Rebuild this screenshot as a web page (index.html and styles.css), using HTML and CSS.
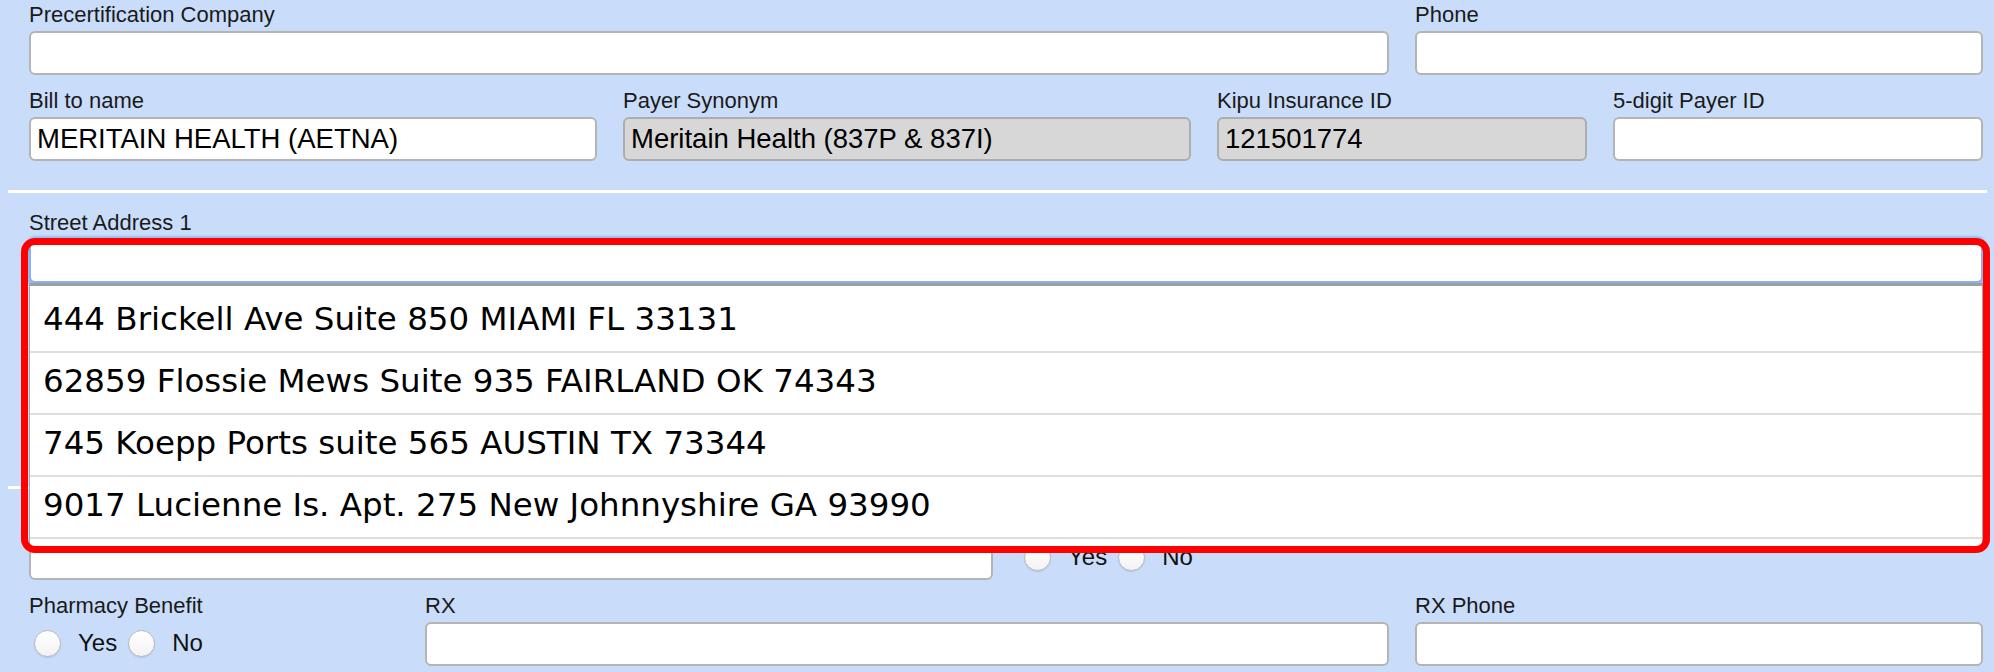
FILE: index.html
```html
<!DOCTYPE html>
<html lang="en">
<head>
<meta charset="utf-8">
<title>Insurance form</title>
<link rel="stylesheet" href="styles.css">
</head>
<body>
<form class="form">
  <div class="row">
    <div class="col w70"><label class="lbl">Precertification Company</label><input class="inp" type="text"></div>
    <div class="col w30"><label class="lbl">Phone</label><input class="inp" type="text"></div>
  </div>
  <div class="row">
    <div class="col w30"><label class="lbl">Bill to name</label><input class="inp" type="text" value="MERITAIN HEALTH (AETNA)"></div>
    <div class="col w30"><label class="lbl">Payer Synonym</label><input class="inp ro" type="text" readonly value="Meritain Health (837P &amp; 837I)"></div>
    <div class="col w20"><label class="lbl">Kipu Insurance ID</label><input class="inp ro" type="text" readonly value="121501774"></div>
    <div class="col w20"><label class="lbl">5-digit Payer ID</label><input class="inp" type="text"></div>
  </div>
  <hr class="sep sep1">
  <div class="row">
    <div class="col w100">
      <label class="lbl">Street Address 1</label>
      <div class="ac">
        <input class="inp focus" type="text">
        <ul class="ac-list">
          <li>444 Brickell Ave Suite 850 MIAMI FL 33131</li>
          <li>62859 Flossie Mews Suite 935 FAIRLAND OK 74343</li>
          <li>745 Koepp Ports suite 565 AUSTIN TX 73344</li>
          <li>9017 Lucienne Is. Apt. 275 New Johnnyshire GA 93990</li>
        </ul>
        <div class="hl"></div>
      </div>
    </div>
  </div>
  <div class="row">
    <div class="col w30"><span class="lbl"></span><input class="inp" type="text"></div>
    <div class="col w30"><span class="lbl"></span><input class="inp" type="text"></div>
    <div class="col w20"><span class="lbl"></span><input class="inp" type="text"></div>
    <div class="col w20"><span class="lbl"></span><input class="inp" type="text"></div>
  </div>
  <div class="row">
    <div class="col w50"><span class="lbl"></span><input class="inp" type="text"></div>
    <div class="col w50"><span class="lbl"></span><input class="inp" type="text"></div>
  </div>
  <hr class="sep sep2">
  <div class="row">
    <div class="col w50"><span class="lbl"></span><input class="inp" type="text"></div>
    <div class="col w50"><span class="lbl"></span>
      <div class="radios">
        <label class="radio"><input type="radio" name="q1">Yes</label>
        <label class="radio"><input type="radio" name="q1">No</label>
      </div>
    </div>
  </div>
  <div class="row">
    <div class="col w20"><label class="lbl">Pharmacy Benefit</label>
      <div class="radios">
        <label class="radio"><input type="radio" name="pb">Yes</label>
        <label class="radio"><input type="radio" name="pb">No</label>
      </div>
    </div>
    <div class="col w50"><label class="lbl">RX</label><input class="inp" type="text"></div>
    <div class="col w30"><label class="lbl">RX Phone</label><input class="inp" type="text"></div>
  </div>
</form>
</body>
</html>
```

FILE: styles.css
```css
html, body {
  margin: 0;
  padding: 0;
  height: 100%;
  overflow: hidden;
  background: #c9ddfb;
}

.form {
  display: flex;
  flex-direction: column;
  margin: 0;
  padding: 2px 11px 0 29px;
  font-family: "Liberation Sans", Arial, sans-serif;
  color: #111;
}

.row {
  display: flex;
  margin-left: -26px;
  margin-bottom: 13px;
}

.col {
  box-sizing: border-box;
  padding-left: 26px;
  min-width: 0;
}

.w100 { width: 100%; }
.w70 { width: 70%; }
.w50 { width: 50%; }
.w30 { width: 30%; }
.w20 { width: 20%; }

.lbl {
  display: block;
  height: 25px;
  font-size: 22px;
  line-height: 25px;
  margin-bottom: 4px;
  color: #1a1a1a;
  white-space: nowrap;
}

.inp {
  display: block;
  box-sizing: border-box;
  width: 100%;
  height: 44px;
  margin: 0;
  padding: 0 6px;
  border: 2px solid #b4b4b4;
  border-radius: 6px;
  background: #fff;
  font-family: "Liberation Sans", Arial, sans-serif;
  font-size: 27.5px;
  color: #000;
  outline: none;
}

.inp.ro {
  background: #d7d7d7;
  border-color: #adadad;
}

.inp.focus {
  border-color: #84b2f3;
  box-shadow: 0 0 2px 3px #93bcf6;
}

.sep {
  border: 0;
  height: 3px;
  background: #fff;
  margin-right: -4px;
  margin-left: -21px;
}

.sep1 { margin-top: 16px; margin-bottom: 17px; }
.sep2 { margin-top: 18px; margin-bottom: 18px; }

.ac {
  position: relative;
}

.ac-list {
  position: absolute;
  left: 0;
  right: 0;
  top: 100%;
  z-index: 5;
  box-sizing: border-box;
  margin: 0;
  padding: 5px 0 10px;
  list-style: none;
  background: #fff;
  border: 1px solid #a8a8a8;
  border-top: 3px solid #9e9e9e;
}

.ac-list li {
  box-sizing: border-box;
  height: 62px;
  padding: 0 13px 4px;
  line-height: 56px;
  border-bottom: 2px solid #dedede;
  font-family: "DejaVu Sans", Verdana, sans-serif;
  font-size: 32.5px;
  color: #000;
  white-space: nowrap;
}

.hl {
  position: absolute;
  left: -8px;
  right: -7px;
  top: -1px;
  height: 315px;
  z-index: 6;
  box-sizing: border-box;
  border: 7px solid #ff0000;
  border-radius: 14px;
  pointer-events: none;
}

.radios {
  display: flex;
  align-items: center;
  height: 42px;
  padding-left: 5px;
}

.radio {
  display: flex;
  align-items: center;
  margin-right: 11px;
  font-size: 24px;
  color: #111;
}

.radio input {
  appearance: none;
  -webkit-appearance: none;
  box-sizing: border-box;
  width: 27px;
  height: 27px;
  margin: 0 17px 0 0;
  border: 1px solid #bababa;
  border-radius: 50%;
  background: linear-gradient(#ffffff, #f3f3f3);
  box-shadow: 0 1px 1px rgba(0, 0, 0, 0.12);
}
```
